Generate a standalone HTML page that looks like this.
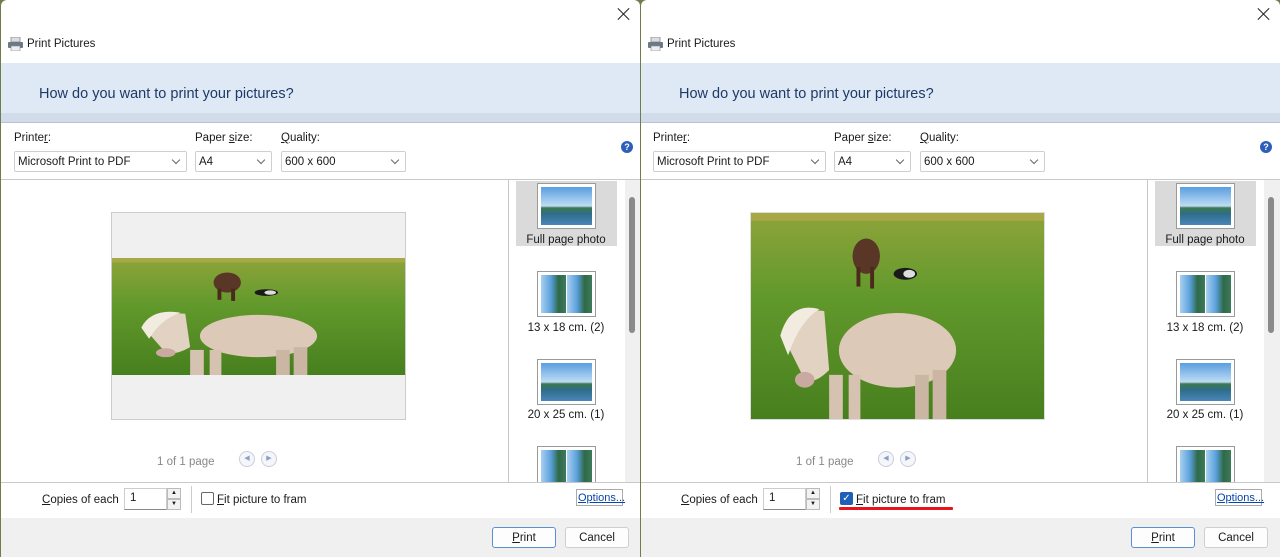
<!DOCTYPE html>
<html><head><meta charset="utf-8"><style>
*{margin:0;padding:0;box-sizing:border-box}
body{width:1280px;height:557px;overflow:hidden;background:#6f7d4a;font-family:"Liberation Sans",sans-serif;font-size:11.5px;color:#1a1a1a;position:relative}
.dlg{position:absolute;top:0;width:639px;height:557px;background:#fff;overflow:hidden;border-radius:6px 6px 0 0}
.a{position:absolute}
.combo{position:absolute;height:21px;border:1px solid #cfcfcf;border-radius:2px;background:#fff;padding:4px 0 0 3px;font-size:11.5px}
.combo:after{content:"";position:absolute;right:7px;top:5px;width:5px;height:5px;border-right:1px solid #666;border-bottom:1px solid #666;transform:rotate(45deg)}
.thumb{position:absolute;border:1px solid #9a9a9a;background:#fff;padding:3px;overflow:hidden}
.cap{position:absolute;width:116px;text-align:center;font-size:11.5px}
.btn{position:absolute;height:21px;border:1px solid #cfcfcf;border-radius:3px;background:#fdfdfd;text-align:center;padding-top:4px}
.x{position:absolute;left:617px;top:8px;width:12px;height:12px}
.x:before,.x:after{content:"";position:absolute;left:5px;top:-2px;width:1.2px;height:16px;background:#222;transform:rotate(45deg)}
.x:after{transform:rotate(-45deg)}
u{text-decoration:underline}
</style></head><body>
<svg width="0" height="0" style="position:absolute">
<defs>
<linearGradient id="g1" x1="0" y1="0" x2="0" y2="1"><stop offset="0" stop-color="#8ea43a"/><stop offset=".4" stop-color="#62992c"/><stop offset="1" stop-color="#477f1e"/></linearGradient>
<symbol id="pony" viewBox="0 0 300 210" preserveAspectRatio="none">
<rect width="300" height="210" fill="url(#g1)"/>
<rect width="300" height="8" fill="#a7a846"/>
<ellipse cx="118" cy="44" rx="14" ry="18" fill="#5a3626"/>
<rect x="108" y="55" width="4" height="20" fill="#4a2a1c"/><rect x="122" y="55" width="4" height="22" fill="#4a2a1c"/>
<ellipse cx="158" cy="62" rx="12" ry="6" fill="#1a1a1a"/><ellipse cx="162" cy="62" rx="6" ry="4" fill="#ddd"/>
<ellipse cx="150" cy="140" rx="60" ry="38" fill="#ddc9b8"/>
<path d="M35 130 Q45 95 75 100 L80 160 Q65 175 55 170 Z" fill="#e2d2c2"/>
<path d="M30 125 Q40 90 70 98 Q50 110 38 145 Z" fill="#f2ece0"/>
<rect x="80" y="165" width="14" height="45" fill="#d6c2b0"/><rect x="100" y="165" width="12" height="45" fill="#d6c2b0"/>
<rect x="168" y="165" width="14" height="45" fill="#cbb6a4"/><rect x="186" y="160" width="14" height="50" fill="#cbb6a4"/>
<ellipse cx="55" cy="170" rx="10" ry="8" fill="#c9a9a0"/>
</symbol>
<linearGradient id="sky" x1="0" y1="0" x2="0" y2="1"><stop offset="0" stop-color="#5a9ee0"/><stop offset=".5" stop-color="#bfdcf3"/><stop offset=".55" stop-color="#3c7a4e"/><stop offset=".7" stop-color="#2f6c8a"/><stop offset="1" stop-color="#4a86b8"/></linearGradient>
<linearGradient id="sky2" x1="0" y1="0" x2="1" y2="0"><stop offset="0" stop-color="#a8d0f0"/><stop offset=".4" stop-color="#5aa0dc"/><stop offset=".7" stop-color="#2e6a48"/><stop offset="1" stop-color="#3c7a5a"/></linearGradient>
</defs></svg>

<div class="dlg" style="left:1px">
 <div class="x"></div>
 <svg class="a" style="left:7px;top:37px" width="16" height="14"><rect x="3" y="0" width="9" height="5" fill="#ddd" stroke="#888" stroke-width=".8"/><rect x="0" y="5" width="15" height="6" rx="1" fill="#6a7a8a"/><rect x="3" y="9" width="9" height="5" fill="#eee" stroke="#888" stroke-width=".6"/></svg>
 <div class="a" style="left:26px;top:38px">Print Pictures</div>
 <div class="a" style="left:0;top:63px;width:639px;height:59px;background:#dfe9f5"></div>
 <div class="a" style="left:0;top:113px;width:639px;height:9px;background:#d0dcea"></div>
 <div class="a" style="left:0;top:122px;width:639px;height:1px;background:#b9c3cd"></div>
 <div class="a" style="left:38px;top:86px;font-size:14.5px;color:#1e3966">How do you want to print your pictures?</div>
 <div class="a" style="left:13px;top:132px">Printe<u>r</u>:</div>
 <div class="a" style="left:194px;top:132px">Paper <u>s</u>ize:</div>
 <div class="a" style="left:280px;top:132px"><u>Q</u>uality:</div>
 <div class="combo" style="left:13px;top:151px;width:173px">Microsoft Print to PDF</div>
 <div class="combo" style="left:194px;top:151px;width:77px">A4</div>
 <div class="combo" style="left:280px;top:151px;width:125px">600 x 600</div>
 <div class="a" style="left:620px;top:141px;width:12px;height:12px;border-radius:6px;background:#2d5fb8;color:#fff;font-size:9px;font-weight:bold;text-align:center;line-height:12px">?</div>
 <div class="a" style="left:0;top:179px;width:639px;height:1px;background:#c8c8c8"></div>
 <div class="a" style="left:507px;top:180px;width:1px;height:302px;background:#c8c8c8"></div>
 <div class="a" style="left:624px;top:180px;width:15px;height:302px;background:#f0f0f0"></div>
 <div class="a" style="left:628px;top:197px;width:6px;height:136px;background:#8a8a8a;border-radius:3px"></div>
 <div class="a" style="left:515px;top:181px;width:101px;height:65px;background:#dadada"></div>
 <div class="thumb" style="left:536px;top:183px;width:59px;height:46px"><svg width="51" height="38"><rect width="51" height="38" fill="url(#sky)"/></svg></div>
 <div class="cap" style="left:507px;top:234px">Full page photo</div>
 <div class="thumb" style="left:536px;top:271px;width:59px;height:46px"><svg width="51" height="38"><rect width="25" height="38" fill="url(#sky2)"/><rect x="26" width="25" height="38" fill="url(#sky2)"/></svg></div>
 <div class="cap" style="left:507px;top:322px">13 x 18 cm. (2)</div>
 <div class="thumb" style="left:536px;top:359px;width:59px;height:46px"><svg width="51" height="38"><rect width="51" height="38" fill="url(#sky)"/></svg></div>
 <div class="cap" style="left:507px;top:409px">20 x 25 cm. (1)</div>
 <div class="thumb" style="left:536px;top:446px;width:59px;height:36px;border-bottom:0"><svg width="51" height="38"><rect width="25" height="38" fill="url(#sky2)"/><rect x="26" width="25" height="38" fill="url(#sky2)"/></svg></div>
 <div class="a" style="left:110px;top:212px;width:295px;height:208px;background:#f0f0f0;border:1px solid #ccc"></div>
 <svg class="a" style="left:111px;top:258px" width="293" height="117"><use href="#pony" width="293" height="117"/></svg>
 <div class="a" style="left:156px;top:456px;color:#888">1 of 1 page</div>
 <div class="a" style="left:238px;top:451px;width:16px;height:16px;border-radius:8px;border:1px solid #ccd;background:#f4f6fa;font-size:7px;color:#8aa0c8;text-align:center;line-height:14px">◀</div>
 <div class="a" style="left:260px;top:451px;width:16px;height:16px;border-radius:8px;border:1px solid #ccd;background:#f4f6fa;font-size:7px;color:#8aa0c8;text-align:center;line-height:14px">▶</div>
 <div class="a" style="left:0;top:482px;width:639px;height:1px;background:#c8c8c8"></div>
 <div class="a" style="left:41px;top:494px"><u>C</u>opies of each</div>
 <div class="a" style="left:123px;top:488px;width:43px;height:22px;border:1px solid #ccc;border-bottom:1px solid #888;padding:3px 0 0 5px">1</div>
 <div class="a" style="left:166px;top:488px;width:14px;height:11px;border:1px solid #bbb;background:#f2f2f2;font-size:6px;text-align:center;line-height:9px">▲</div>
 <div class="a" style="left:166px;top:499px;width:14px;height:11px;border:1px solid #bbb;background:#f2f2f2;font-size:6px;text-align:center;line-height:9px">▼</div>
 <div class="a" style="left:190px;top:486px;width:1px;height:27px;background:#ccc"></div>
 <div class="a" style="left:200px;top:492px;width:13px;height:13px;border:1px solid #666;border-radius:2px;background:#fff"></div>
 <div class="a" style="left:216px;top:494px"><u>F</u>it picture to fram</div>
 <div class="a" style="left:575px;top:489px;width:47px;height:17px;border:1px solid #aaa;color:#0645ad;padding:2px 0 0 1px;font-size:11px"><u>Options...</u></div>
 <div class="a" style="left:0;top:518px;width:639px;height:39px;background:#f0f0f0"></div>
 <div class="btn" style="left:491px;top:527px;width:64px;border:1px solid #5a8fd0"><u>P</u>rint</div>
 <div class="btn" style="left:564px;top:527px;width:64px">Cancel</div>
</div>

<div class="dlg" style="left:641px">
 <div class="x"></div>
 <svg class="a" style="left:7px;top:37px" width="16" height="14"><rect x="3" y="0" width="9" height="5" fill="#ddd" stroke="#888" stroke-width=".8"/><rect x="0" y="5" width="15" height="6" rx="1" fill="#6a7a8a"/><rect x="3" y="9" width="9" height="5" fill="#eee" stroke="#888" stroke-width=".6"/></svg>
 <div class="a" style="left:26px;top:38px">Print Pictures</div>
 <div class="a" style="left:0;top:63px;width:639px;height:59px;background:#dfe9f5"></div>
 <div class="a" style="left:0;top:113px;width:639px;height:9px;background:#d0dcea"></div>
 <div class="a" style="left:0;top:122px;width:639px;height:1px;background:#b9c3cd"></div>
 <div class="a" style="left:38px;top:86px;font-size:14.5px;color:#1e3966">How do you want to print your pictures?</div>
 <div class="a" style="left:12px;top:132px">Printe<u>r</u>:</div>
 <div class="a" style="left:193px;top:132px">Paper <u>s</u>ize:</div>
 <div class="a" style="left:279px;top:132px"><u>Q</u>uality:</div>
 <div class="combo" style="left:12px;top:151px;width:173px">Microsoft Print to PDF</div>
 <div class="combo" style="left:193px;top:151px;width:77px">A4</div>
 <div class="combo" style="left:279px;top:151px;width:125px">600 x 600</div>
 <div class="a" style="left:619px;top:141px;width:12px;height:12px;border-radius:6px;background:#2d5fb8;color:#fff;font-size:9px;font-weight:bold;text-align:center;line-height:12px">?</div>
 <div class="a" style="left:0;top:179px;width:639px;height:1px;background:#c8c8c8"></div>
 <div class="a" style="left:506px;top:180px;width:1px;height:302px;background:#c8c8c8"></div>
 <div class="a" style="left:623px;top:180px;width:16px;height:302px;background:#f0f0f0"></div>
 <div class="a" style="left:627px;top:197px;width:6px;height:136px;background:#8a8a8a;border-radius:3px"></div>
 <div class="a" style="left:514px;top:181px;width:101px;height:65px;background:#dadada"></div>
 <div class="thumb" style="left:535px;top:183px;width:59px;height:46px"><svg width="51" height="38"><rect width="51" height="38" fill="url(#sky)"/></svg></div>
 <div class="cap" style="left:506px;top:234px">Full page photo</div>
 <div class="thumb" style="left:535px;top:271px;width:59px;height:46px"><svg width="51" height="38"><rect width="25" height="38" fill="url(#sky2)"/><rect x="26" width="25" height="38" fill="url(#sky2)"/></svg></div>
 <div class="cap" style="left:506px;top:322px">13 x 18 cm. (2)</div>
 <div class="thumb" style="left:535px;top:359px;width:59px;height:46px"><svg width="51" height="38"><rect width="51" height="38" fill="url(#sky)"/></svg></div>
 <div class="cap" style="left:506px;top:409px">20 x 25 cm. (1)</div>
 <div class="thumb" style="left:535px;top:446px;width:59px;height:36px;border-bottom:0"><svg width="51" height="38"><rect width="25" height="38" fill="url(#sky2)"/><rect x="26" width="25" height="38" fill="url(#sky2)"/></svg></div>
 <div class="a" style="left:109px;top:212px;width:295px;height:208px;border:1px solid #ddd"></div>
 <svg class="a" style="left:110px;top:213px" width="293" height="206"><use href="#pony" width="293" height="206"/></svg>
 <div class="a" style="left:155px;top:456px;color:#888">1 of 1 page</div>
 <div class="a" style="left:237px;top:451px;width:16px;height:16px;border-radius:8px;border:1px solid #ccd;background:#f4f6fa;font-size:7px;color:#8aa0c8;text-align:center;line-height:14px">◀</div>
 <div class="a" style="left:259px;top:451px;width:16px;height:16px;border-radius:8px;border:1px solid #ccd;background:#f4f6fa;font-size:7px;color:#8aa0c8;text-align:center;line-height:14px">▶</div>
 <div class="a" style="left:0;top:482px;width:639px;height:1px;background:#c8c8c8"></div>
 <div class="a" style="left:40px;top:494px"><u>C</u>opies of each</div>
 <div class="a" style="left:122px;top:488px;width:43px;height:22px;border:1px solid #ccc;border-bottom:1px solid #888;padding:3px 0 0 5px">1</div>
 <div class="a" style="left:165px;top:488px;width:14px;height:11px;border:1px solid #bbb;background:#f2f2f2;font-size:6px;text-align:center;line-height:9px">▲</div>
 <div class="a" style="left:165px;top:499px;width:14px;height:11px;border:1px solid #bbb;background:#f2f2f2;font-size:6px;text-align:center;line-height:9px">▼</div>
 <div class="a" style="left:189px;top:486px;width:1px;height:27px;background:#ccc"></div>
 <div class="a" style="left:199px;top:492px;width:13px;height:13px;border-radius:2px;background:#1f5fb8;color:#fff;font-size:10px;text-align:center;line-height:13px">✓</div>
 <div class="a" style="left:215px;top:494px"><u>F</u>it picture to fram</div>
 <div class="a" style="left:198px;top:507px;width:114px;height:3px;background:#e8141c;border-radius:1px"></div>
 <div class="a" style="left:574px;top:489px;width:47px;height:17px;border:1px solid #aaa;color:#0645ad;padding:2px 0 0 1px;font-size:11px"><u>Options...</u></div>
 <div class="a" style="left:0;top:518px;width:639px;height:39px;background:#f0f0f0"></div>
 <div class="btn" style="left:490px;top:527px;width:64px;border:1px solid #5a8fd0"><u>P</u>rint</div>
 <div class="btn" style="left:563px;top:527px;width:64px">Cancel</div>
</div>
</body></html>
